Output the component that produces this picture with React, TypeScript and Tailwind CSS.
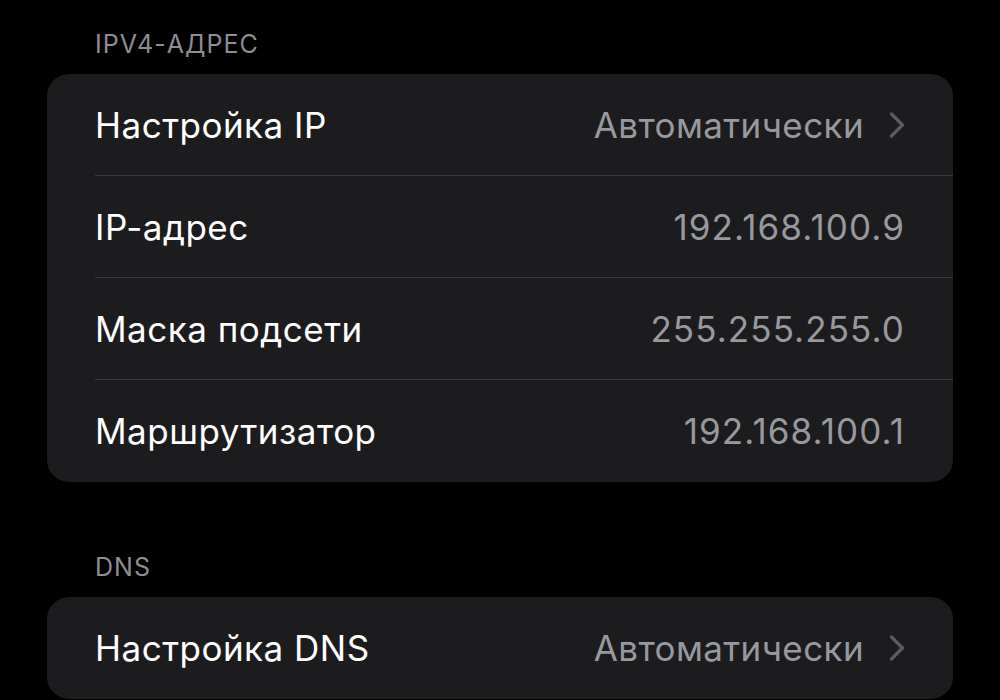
import React from "react";

type Row = {
  label: string;
  value: string;
  chevron?: boolean;
};

const ipv4Rows: Row[] = [
  { label: "Настройка IP", value: "Автоматически", chevron: true },
  { label: "IP-адрес", value: "192.168.100.9" },
  { label: "Маска подсети", value: "255.255.255.0" },
  { label: "Маршрутизатор", value: "192.168.100.1" },
];

const dnsRows: Row[] = [{ label: "Настройка DNS", value: "Автоматически", chevron: true }];

function Chevron() {
  return (
    <svg width="16" height="26" viewBox="0 0 16 26" fill="none" className="ml-[25px] shrink-0">
      <path
        d="M2.5 2 L13.5 13 L2.5 24"
        stroke="#5b5b60"
        strokeWidth="3.2"
        strokeLinecap="round"
        strokeLinejoin="round"
      />
    </svg>
  );
}

function Section({ title, rows }: { title: string; rows: Row[] }) {
  return (
    <section>
      <h3 className="pl-[48px] text-[25px] leading-[30px] text-[#8d8d93] tracking-[1px] mb-[15px]">
        {title}
      </h3>
      <div className="bg-[#1c1c1e] rounded-[22px] overflow-hidden">
        {rows.map((row, i) => {
          // IP-адреса в SF шире, чем в Inter — добавляем разрядку
          const isNumeric = /^\d/.test(row.value);
          return (
            <div key={row.label} className="pl-[48px]">
              <div
                className={`flex items-center justify-between h-[102px] pr-[48px] ${
                  i < rows.length - 1 ? "border-b border-[#3a3a3c]" : ""
                }`}
              >
                <span className="text-[35px] leading-[40px] tracking-[0.5px] text-white">
                  {row.label}
                </span>
                <div className="flex items-center">
                  <span
                    className={`text-[35px] leading-[40px] text-[#98989f] ${
                      isNumeric ? "tracking-[1.1px]" : "tracking-[0.4px]"
                    }`}
                  >
                    {row.value}
                  </span>
                  {row.chevron && <Chevron />}
                </div>
              </div>
            </div>
          );
        })}
      </div>
    </section>
  );
}

export default function App() {
  return (
    <div
      className="w-[1000px] h-[700px] overflow-hidden bg-black px-[47px] pt-[29px] flex flex-col gap-[70px]"
      style={{ fontFamily: "Inter, 'Noto Sans', sans-serif" }}
    >
      <Section title="IPV4-АДРЕС" rows={ipv4Rows} />
      <Section title="DNS" rows={dnsRows} />
    </div>
  );
}
